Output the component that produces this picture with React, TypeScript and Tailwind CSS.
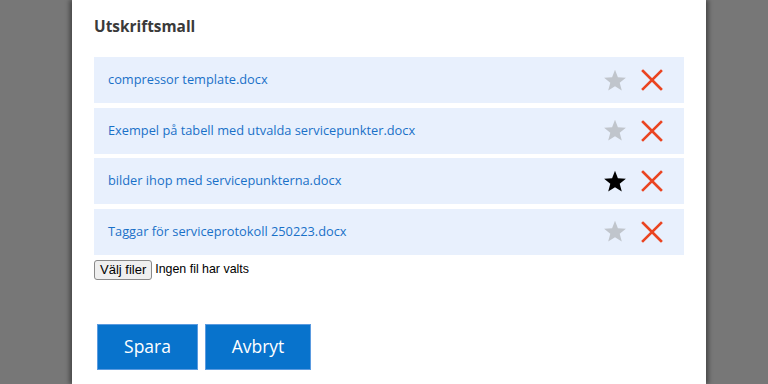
import React from 'react';

type Template = {
  name: string;
  isDefault: boolean;
};

const templates: Template[] = [
  { name: 'compressor template.docx', isDefault: false },
  { name: 'Exempel på tabell med utvalda servicepunkter.docx', isDefault: false },
  { name: 'bilder ihop med servicepunkterna.docx', isDefault: true },
  { name: 'Taggar för serviceprotokoll 250223.docx', isDefault: false },
];

const StarIcon = ({ filled }: { filled: boolean }) => (
  <svg width="24" height="23" viewBox="0 0 24 23" aria-hidden="true">
    <path
      d="M12 0.8 L14.9 8.3 L22.9 8.7 L16.7 13.8 L18.8 21.6 L12 17.2 L5.2 21.6 L7.3 13.8 L1.1 8.7 L9.1 8.3 Z"
      fill={filled ? '#000000' : '#c0c5cc'}
    />
  </svg>
);

const CrossIcon = () => (
  <svg width="22" height="22" viewBox="0 0 22 22" aria-hidden="true">
    <path d="M2 2 L20 20 M20 2 L2 20" stroke="#ea4421" strokeWidth="2.6" strokeLinecap="square" />
  </svg>
);

const TemplateRow = ({ template }: { template: Template }) => (
  <div className="flex h-[46px] items-center bg-[#e8f0fd] pl-[14px] pr-[21px]">
    <a className="flex-1 cursor-pointer text-[12.8px] text-[#1a70c8]">{template.name}</a>
    <button className="mr-[14px] flex items-center">
      <StarIcon filled={template.isDefault} />
    </button>
    <button className="flex items-center">
      <CrossIcon />
    </button>
  </div>
);

export default function App() {
  return (
    <div className="flex h-[384px] w-[768px] overflow-hidden bg-[#777777] font-['Open_Sans',sans-serif]">
      <div className="ml-[72px] flex h-full w-[634px] flex-col bg-white px-[22px] pt-[14px] shadow-[-3px_0_4px_rgba(0,0,0,0.35),3px_0_4px_rgba(0,0,0,0.35)]">
        <h2 className="text-[15.4px] font-bold leading-[26px] text-[#3a3a3a]">Utskriftsmall</h2>

        <div className="mt-[17px] flex flex-col gap-[4.5px]">
          {templates.map((t) => (
            <TemplateRow key={t.name} template={t} />
          ))}
        </div>

        <div className="mt-[5px] flex items-center gap-[3px] font-['Liberation_Sans',sans-serif] text-[12.4px] text-black">
          <button className="h-[20px] rounded-[3px] border border-[#8a8a8a] bg-[#efefef] px-[5px] text-[13px] leading-none">
            Välj filer
          </button>
          <span>Ingen fil har valts</span>
        </div>

        <div className="mt-[44px] flex gap-[7px] pl-[3px]">
          <button className="h-[46px] w-[101px] border border-[#5b9be0] bg-[#0873cc] text-[17.5px] text-white">
            Spara
          </button>
          <button className="h-[46px] w-[106px] border border-[#5b9be0] bg-[#0873cc] text-[17.5px] text-white">
            Avbryt
          </button>
        </div>
      </div>
    </div>
  );
}
